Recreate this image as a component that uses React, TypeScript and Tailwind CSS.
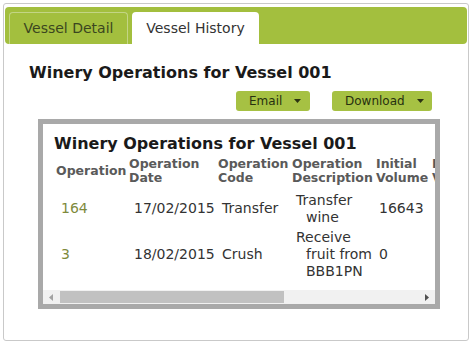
import React from 'react';

const rows = [
    { op: '164', date: '17/02/2015', code: 'Transfer', desc: 'Transfer wine', vol: '16643', final: '16643' },
    { op: '3', date: '18/02/2015', code: 'Crush', desc: 'Receive fruit from BBB1PN', vol: '0', final: '0' },
];

function Caret() {
    return (
        <svg width="7" height="4" viewBox="0 0 7 4" className="ml-[12px]">
            <path d="M0 0 L7 0 L3.5 4 Z" fill="#2b3312" />
        </svg>
    );
}

export default function App() {
    return (
        <div className="w-[474px] h-[345px] bg-white pt-[3px] pl-[3px] font-['DejaVu_Sans',sans-serif]">
            <div className="w-[466px] h-[338px] border border-[#c9c9c9] rounded-[3px] px-[1px] pt-[3px]">
                {/* Tabs */}
                <div className="h-[37px] bg-[#a3bf3e] rounded-[4px] flex items-end gap-[4px] pl-[4px]">
                    <div className="w-[119px] h-[32px] rounded-t-[4px] border border-b-0 border-[#c3d585] bg-[#a3bf3e] flex items-center justify-center text-[14px] text-[#3b4620]">
                        Vessel Detail
                    </div>
                    <div className="w-[127px] h-[32px] rounded-t-[4px] bg-white flex items-center justify-center text-[14px] text-[#333]">
                        Vessel History
                    </div>
                </div>

                {/* Body */}
                <h2 className="mt-[19px] ml-[24px] text-[16px] leading-[20px] font-bold text-[#1a1a1a]">
                    Winery Operations for Vessel 001
                </h2>
                <div className="mt-[8px] flex justify-end gap-[22px] pr-[35px]">
                    <button className="w-[74px] h-[20px] rounded-[3px] bg-[#a6c143] flex items-center pl-[13px] text-[12px] text-[#27300f]">
                        Email
                        <Caret />
                    </button>
                    <button className="w-[100px] h-[20px] rounded-[3px] bg-[#a6c143] flex items-center pl-[13px] text-[12px] text-[#27300f]">
                        Download
                        <Caret />
                    </button>
                </div>

                {/* Operations box */}
                <div className="mt-[8px] ml-[33px] w-[402px] h-[190px] border-[5px] border-[#a9a9a9] bg-white flex flex-col">
                    <div className="flex-1 overflow-hidden">
                        <h3 className="pt-[10px] pl-[11px] text-[16px] leading-[20px] font-bold text-[#1a1a1a] whitespace-nowrap">
                            Winery Operations for Vessel 001
                        </h3>
                        <table className="mt-[3px] ml-[13px] table-fixed border-collapse w-[420px]">
                            <colgroup>
                                <col className="w-[73px]" />
                                <col className="w-[89px]" />
                                <col className="w-[74px]" />
                                <col className="w-[84px]" />
                                <col className="w-[56px]" />
                                <col className="w-[60px]" />
                            </colgroup>
                            <thead>
                                <tr className="text-left align-middle text-[12.5px] leading-[14px] font-bold text-[#5a5a5a] whitespace-nowrap">
                                    <th className="p-0 pb-[5px] font-bold">Operation</th>
                                    <th className="p-0 pb-[5px] font-bold">Operation<br />Date</th>
                                    <th className="p-0 pb-[5px] font-bold">Operation<br />Code</th>
                                    <th className="p-0 pb-[5px] font-bold">Operation<br />Description</th>
                                    <th className="p-0 pb-[5px] font-bold">Initial<br />Volume</th>
                                    <th className="p-0 pb-[5px] font-bold">Final<br />Volume</th>
                                </tr>
                            </thead>
                            <tbody className="text-[14px] leading-[17px] text-[#333]">
                                {rows.map((r) => (
                                    <tr key={r.op} className="align-middle">
                                        <td className="py-[1.5px] pl-[5px] text-[#7e8a3c]">{r.op}</td>
                                        <td className="py-[1.5px] pl-[5px] whitespace-nowrap">{r.date}</td>
                                        <td className="py-[1.5px] pl-[4px]">{r.code}</td>
                                        <td className="py-[1.5px] pl-[14px] pr-0 -indent-[10px]">{r.desc}</td>
                                        <td className="py-[1.5px] pl-[3px]">{r.vol}</td>
                                        <td className="py-[1.5px] pl-[3px]">{r.final}</td>
                                    </tr>
                                ))}
                            </tbody>
                        </table>
                    </div>

                    {/* Horizontal scrollbar */}
                    <div className="h-[14px] bg-[#f1f1f1] flex items-center">
                        <div className="w-[16px] h-full flex items-center justify-center">
                            <svg width="4" height="7" viewBox="0 0 4 7">
                                <path d="M4 0 L0 3.5 L4 7 Z" fill="#a3a3a3" />
                            </svg>
                        </div>
                        <div className="ml-[1px] w-[224px] h-[12px] bg-[#c1c1c1]" />
                        <div className="flex-1" />
                        <div className="w-[16px] h-full flex items-center justify-center">
                            <svg width="4" height="7" viewBox="0 0 4 7">
                                <path d="M0 0 L4 3.5 L0 7 Z" fill="#505050" />
                            </svg>
                        </div>
                    </div>
                </div>
            </div>
        </div>
    );
}
